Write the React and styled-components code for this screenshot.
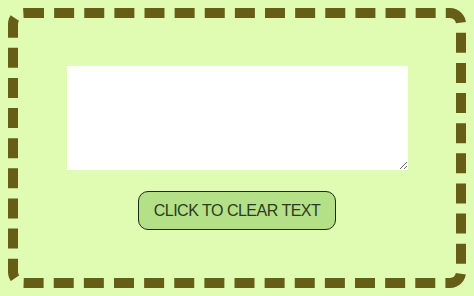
import React, { useState } from "react";
import styled, { createGlobalStyle } from "styled-components";

const Global = createGlobalStyle`
  html, body { margin: 0; padding: 0; background: #e0fcb2; }
  body { padding: 8px; font-family: "Liberation Sans", Arial, sans-serif; }
`;

const Frame = styled.div`
  border: 10px dashed #665d16;
  border-radius: 16px;
  height: 280px;
  box-sizing: border-box;
  padding: 48px 48px 0;
  display: flex;
  flex-direction: column;
  align-items: center;
  gap: 21px;
`;

const TextBox = styled.textarea`
  display: block;
  width: 341px;
  height: 104px;
  box-sizing: border-box;
  border: none;
  outline: none;
  background: #ffffff;
  padding: 4px;
  font-family: "Liberation Sans", Arial, sans-serif;
  font-size: 14px;
  resize: both;
`;

const ClearButton = styled.button`
  width: 198px;
  height: 39px;
  box-sizing: border-box;
  border: 1.5px solid #1c2a12;
  border-radius: 10px;
  background: #b4e088;
  color: #2c3b20;
  font-family: "Liberation Sans", Arial, sans-serif;
  font-size: 16px;
  letter-spacing: -0.5px;
  cursor: pointer;
  padding: 0;
`;

export default function App() {
  const [text, setText] = useState("");
  return (
    <>
      <Global />
      <Frame>
        <TextBox value={text} onChange={(e) => setText(e.target.value)} />
        <ClearButton onClick={() => setText("")}>CLICK TO CLEAR TEXT</ClearButton>
      </Frame>
    </>
  );
}
